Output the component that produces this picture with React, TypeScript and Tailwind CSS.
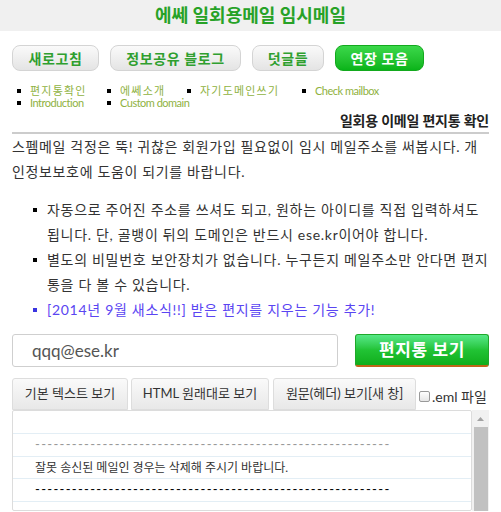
const font = "font-['Lato','Noto_Sans_CJK_KR',sans-serif]";

const topButtons = [
  { label: "새로고침", w: "w-[87px]" },
  { label: "정보공유 블로그", w: "w-[131px]" },
  { label: "덧글들", w: "w-[72px]" },
];

const Bullet = ({ color = "bg-black" }: { color?: string }) => (
  <span className={`inline-block w-[4px] h-[4px] ${color} shrink-0`} />
);

const NavItem = ({ label, width, ko }: { label: string; width: string; ko?: boolean }) => (
  <li className={`flex items-center ${width}`}>
    <Bullet />
    <span className={`ml-[9px] text-[#8fb23f] ${ko ? "tracking-[1.2px]" : "tracking-[-0.5px]"}`}>{label}</span>
  </li>
);

const dashes = "-".repeat(58);

const App = () => {
  return (
    <div className={`${font} w-[501px] h-[512px] overflow-hidden bg-white text-[#333]`}>
      {/* header */}
      <div className="h-[31px] bg-[#f0f0f0] flex items-center justify-center">
        <h1 className="text-[18px] font-bold text-[#27a227]">에쎄 일회용메일 임시메일</h1>
      </div>

      <div className="px-[12px]">
        {/* top buttons */}
        <div className="flex gap-[11px] mt-[14px]">
          {topButtons.map((b) => (
            <button
              key={b.label}
              className={`${b.w} h-[26px] rounded-[8px] border border-[#d4d4d4] bg-gradient-to-b from-[#fafafa] to-[#e4e4e4] text-[14px] font-bold text-[#2f9f2f] tracking-[0.6px]`}
            >
              {b.label}
            </button>
          ))}
          <button className="w-[89px] h-[26px] rounded-[8px] border border-[#13a91e] bg-gradient-to-b from-[#3ad84a] to-[#08b418] text-[14px] font-bold text-white tracking-[0.6px]">
            연장 모음
          </button>
        </div>

        {/* nav links */}
        <ul className="mt-[14px] pl-[5px] text-[11px] leading-[12px]">
          <div className="flex">
            <NavItem label="편지통확인" width="w-[90px]" ko />
            <NavItem label="에쎄소개" width="w-[80px]" ko />
            <NavItem label="자기도메인쓰기" width="w-[115px]" ko />
            <NavItem label="Check mailbox" width="w-[90px]" />
          </div>
          <div className="flex">
            <NavItem label="Introduction" width="w-[90px]" />
            <NavItem label="Custom domain" width="w-[90px]" />
          </div>
        </ul>

        <h2 className="text-right text-[14px] font-bold text-[#222] leading-[20px] mt-[2px] tracking-[-0.2px]">
          일회용 이메일 편지통 확인
        </h2>
        <div className="h-[2px] bg-[#cccccc] mt-[1px]" />

        {/* intro */}
        <p className="text-[14px] leading-[25px] tracking-[0.65px] whitespace-nowrap">
          스펨메일 걱정은 뚝! 귀찮은 회원가입 필요없이 임시 메일주소를 써봅시다. 개<br />
          인정보보호에 도움이 되기를 바랍니다.
        </p>

        <ul className="mt-[13px] pl-[21px] text-[14px] leading-[25px] tracking-[0.7px] whitespace-nowrap">
          <li className="flex">
            <span className="h-[25px] flex items-center"><Bullet /></span>
            <span className="ml-[10px]">
              자동으로 주어진 주소를 쓰셔도 되고, 원하는 아이디를 직접 입력하셔도<br />
              됩니다. 단, 골뱅이 뒤의 도메인은 반드시 ese.kr이어야 합니다.
            </span>
          </li>
          <li className="flex">
            <span className="h-[25px] flex items-center"><Bullet /></span>
            <span className="ml-[10px]">
              별도의 비밀번호 보안장치가 없습니다. 누구든지 메일주소만 안다면 편지<br />
              통을 다 볼 수 있습니다.
            </span>
          </li>
          <li className="flex text-[#5a45f2]">
            <span className="h-[25px] flex items-center"><Bullet color="bg-[#3a35e0]" /></span>
            <span className="ml-[10px]">[2014년 9월 새소식!!] 받은 편지를 지우는 기능 추가!</span>
          </li>
        </ul>

        {/* address form */}
        <div className="flex justify-between mt-[12px]">
          <div className="w-[326px] h-[33px] border border-[#cfcfcf] rounded-[3px] flex items-center pl-[19px] text-[17px] text-[#555]">
            qqq@ese.kr
          </div>
          <button className="w-[134px] h-[33px] rounded-[3px] border border-[#1fa82a] border-b-[2px] border-b-[#c0661a] bg-gradient-to-b from-[#55e886] via-[#21c334] to-[#0fae1b] text-[17px] text-white font-bold tracking-[0.6px]">
            편지통 보기
          </button>
        </div>

        {/* view tabs */}
        <div className="flex items-end mt-[11px] text-[13px] text-[#333]">
          <button className="w-[116px] h-[32px] border border-[#ddd] rounded-t-[3px] bg-gradient-to-b from-[#fafafa] to-[#e8e8e8]">
            기본 텍스트 보기
          </button>
          <button className="w-[138px] h-[32px] ml-[3px] border border-[#ddd] rounded-t-[3px] bg-gradient-to-b from-[#fafafa] to-[#e8e8e8]">
            HTML 원래대로 보기
          </button>
          <button className="w-[143px] h-[32px] ml-[4px] border border-[#ddd] rounded-t-[3px] bg-gradient-to-b from-[#fafafa] to-[#e8e8e8]">
            원문(헤더) 보기[새 창]
          </button>
          <label className="flex items-center self-start mt-[8px] ml-[3px] text-[14px]">
            <span className="w-[11px] h-[11px] border border-[#999] rounded-[2px] bg-gradient-to-b from-white to-[#e6e6e6]" />
            <span className="ml-[2px]">.eml 파일</span>
          </label>
        </div>

        {/* message body */}
        <div className="flex h-[101px]">
          <div className="w-[462px] border border-[#dcdcdc] rounded-[2px] text-[12px] text-[#333]">
            <div className="h-[23px] border-b border-[#e3eef5]" />
            <div className="h-[23px] border-b border-[#e3eef5] pl-[22px] flex items-center text-[#999] text-[13px] tracking-[1.3px]">{dashes}</div>
            <div className="h-[22px] border-b border-[#e3eef5] pl-[22px] flex items-center">
              잘못 송신된 메일인 경우는 삭제해 주시기 바랍니다.
            </div>
            <div className="h-[23px] border-b border-[#e3eef5] pl-[22px] flex items-center text-black text-[13px] tracking-[1.3px]">{dashes}</div>
          </div>
          <div className="w-[17px] bg-[#f1f1f1] flex flex-col items-center">
            <svg width="7" height="4" viewBox="0 0 7 4" className="mt-[7px]">
              <path d="M3.5 0L7 4H0z" fill="#a3a3a3" />
            </svg>
            <div className="mt-[6px] w-[14px] flex-1 bg-[#c1c1c1]" />
          </div>
        </div>
      </div>
    </div>
  );
};

export default App;
